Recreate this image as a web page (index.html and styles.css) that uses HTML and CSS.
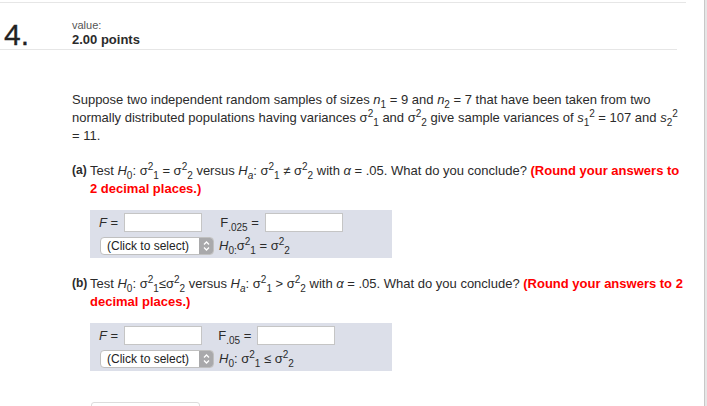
FILE: index.html
```html
<!DOCTYPE html>
<html>
<head>
<meta charset="utf-8">
<link rel="stylesheet" href="styles.css">
</head>
<body>
<div class="page">
  <main class="main">
    <div class="rule rule-top"></div>
    <header class="q-head">
      <div class="q-num">4.</div>
      <div class="q-value">
        <div class="q-value-label">value:</div>
        <div class="q-points">2.00 points</div>
      </div>
    </header>
    <div class="rule rule-mid"></div>

    <p class="stem">Suppose two independent random samples of sizes <i>n</i><sub>1</sub> = 9 and <i>n</i><sub>2</sub> = 7 that have been taken from two normally distributed populations having variances σ<sup>2</sup><sub>1</sub> and σ<sup>2</sup><sub>2</sub> give sample variances of <i>s</i><sub>1</sub><sup>2</sup> = 107 and <i>s</i><sub>2</sub><sup>2</sup> = 11.</p>

    <section class="part part-a">
      <div class="part-q"><b class="tag">(a)</b><p class="q-text">Test <i>H</i><sub>0</sub>: σ<sup>2</sup><sub>1</sub> = σ<sup>2</sup><sub>2</sub> versus <i>H<sub>a</sub></i>: σ<sup>2</sup><sub>1</sub> ≠ σ<sup>2</sup><sub>2</sub> with <i>α</i> = .05. What do you conclude? <span class="red">(Round your answers to 2 decimal places.)</span></p></div>
      <div class="answer-box">
        <div class="ans-row">
          <span class="lab"><i>F</i> =</span>
          <span class="input"></span>
          <span class="lab lab-f">F<sub>.025</sub> =</span>
          <span class="input"></span>
        </div>
        <div class="ans-row">
          <span class="select"><span class="select-text">(Click to select)</span><span class="select-btn"><svg width="9" height="12" viewBox="0 0 9 12"><path d="M2 4.5 L4.5 2 L7 4.5 M2 7.5 L4.5 10 L7 7.5" fill="none" stroke="#fff" stroke-width="1.3"/></svg></span></span>
          <span class="lab"><i>H</i><sub>0:</sub>σ<sup>2</sup><sub>1</sub> = σ<sup>2</sup><sub>2</sub></span>
        </div>
      </div>
    </section>

    <section class="part part-b">
      <div class="part-q"><b class="tag">(b)</b><p class="q-text">Test <i>H</i><sub>0</sub>: σ<sup>2</sup><sub>1</sub>≤σ<sup>2</sup><sub>2</sub> versus <i>H<sub>a</sub></i>: σ<sup>2</sup><sub>1</sub> &gt; σ<sup>2</sup><sub>2</sub> with <i>α</i> = .05. What do you conclude? <span class="red">(Round your answers to 2 decimal places.)</span></p></div>
      <div class="answer-box">
        <div class="ans-row">
          <span class="lab"><i>F</i> =</span>
          <span class="input"></span>
          <span class="lab lab-f lab-f05">F<sub>.05</sub> =</span>
          <span class="input"></span>
        </div>
        <div class="ans-row">
          <span class="select"><span class="select-text">(Click to select)</span><span class="select-btn"><svg width="9" height="12" viewBox="0 0 9 12"><path d="M2 4.5 L4.5 2 L7 4.5 M2 7.5 L4.5 10 L7 7.5" fill="none" stroke="#fff" stroke-width="1.3"/></svg></span></span>
          <span class="lab"><i>H</i><sub>0</sub>: σ<sup>2</sup><sub>1</sub> ≤ σ<sup>2</sup><sub>2</sub></span>
        </div>
      </div>
    </section>

    <div class="next-box"></div>
  </main>
  <aside class="edge"></aside>
</div>
</body>
</html>
```

FILE: styles.css
```css
html, body {
  margin: 0;
  padding: 0;
  background: #fff;
  overflow: hidden;
}
body {
  font-family: "Liberation Sans", Arial, sans-serif;
  color: #2b2b2b;
  font-size: 13px;
}
.page {
  display: flex;
  width: 707px;
  height: 406px;
  overflow: hidden;
}
.main {
  width: 704px;
  flex: none;
}
.edge {
  flex: 1;
  border-left: 1px solid #c8c8c8;
  background: #e6e6e6;
}
.rule {
  height: 1px;
  background: #e6e6e6;
}
.rule-top {
  margin-top: 2px;
  width: 686px;
}
.rule-mid {
  width: 677px;
}
.q-head {
  display: flex;
  height: 46px;
}
.q-num {
  width: 68px;
  padding-left: 4px;
  font-size: 30px;
  line-height: 29px;
  padding-top: 17px;
  color: #222;
  -webkit-text-stroke: 0.3px #222;
}
.q-value {
  padding-top: 16px;
}
.q-value-label {
  font-size: 11px;
  line-height: 12px;
  color: #555;
}
.q-points {
  font-size: 13px;
  font-weight: bold;
  line-height: 16px;
  margin-top: 1px;
}
sub, sup {
  font-size: 10px;
  line-height: 0;
  position: relative;
  vertical-align: baseline;
}
sub { top: 4px; }
sup { top: -5px; }
.stem {
  margin: 41px 0 0 72px;
  width: 614px;
  line-height: 18px;
}
.part {
  margin-left: 72px;
}
.part-q {
  display: flex;
  margin-top: 17px;
  line-height: 18px;
}
.tag {
  width: 18px;
  flex: none;
  font-size: 12px;
  line-height: 16px;
}
.q-text {
  margin: 0;
  width: 596px;
}
.red {
  color: #ff0000;
  font-weight: bold;
}
.answer-box {
  margin: 12px 0 0 18px;
  width: 302px;
  height: 48px;
  background: #dcdfe9;
  box-sizing: border-box;
  padding: 3px 0 0 9px;
  display: flex;
  flex-direction: column;
  gap: 4px;
}
.ans-row {
  display: flex;
  align-items: center;
  height: 19px;
}
.lab {
  white-space: nowrap;
  line-height: 18px;
}
.lab-f {
  margin-left: 18px;
}
.lab-f05 {
  margin-left: 16px;
}
.input {
  width: 78px;
  height: 19px;
  box-sizing: border-box;
  background: #fff;
  border: 1px solid #c5c5c5;
  margin-left: 6px;
}
.select {
  display: flex;
  align-items: stretch;
  width: 114px;
  height: 18px;
  box-sizing: border-box;
  border: 1px solid #c0c0c0;
  border-radius: 4px;
  background: #fff;
  overflow: hidden;
  margin-left: 1px;
  margin-right: 5px;
}
.select-text {
  flex: 1;
  font-size: 12px;
  line-height: 16px;
  padding-left: 6px;
  color: #222;
  white-space: nowrap;
}
.select-btn {
  width: 14px;
  flex: none;
  background: #a9a9ab;
  display: flex;
  align-items: center;
  justify-content: center;
}
.next-box {
  margin: 31px 0 0 91px;
  width: 107px;
  height: 10px;
  border: 1px solid #dcdcdc;
  border-radius: 3px;
}
```
